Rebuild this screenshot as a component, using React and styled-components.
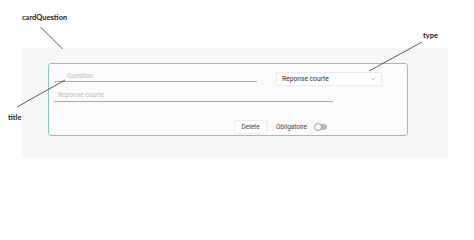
import React from 'react';
import styled, { createGlobalStyle } from 'styled-components';

const GlobalStyle = createGlobalStyle`
  html, body {
    margin: 0;
    padding: 0;
    background: #ffffff;
  }
  body {
    font-family: 'Roboto', 'Liberation Sans', sans-serif;
  }
`;

const Canvas = styled.div`
  position: relative;
  width: 474px;
  height: 227px;
  padding: 48px 0 0 22px;
  box-sizing: border-box;
  overflow: hidden;
`;

const Stage = styled.div`
  width: 426px;
  height: 109px;
  background: #f7f7f7;
  padding: 15px 0 0 26px;
  box-sizing: border-box;
`;

const Card = styled.div`
  width: 360px;
  height: 73px;
  box-sizing: border-box;
  border: 1px solid #8fc4c1;
  border-radius: 3px;
  background: #fcfbfb;
  padding: 7px 0 0 5px;
  display: flex;
  flex-direction: column;
`;

const Row = styled.div`
  display: flex;
  align-items: flex-start;
  gap: ${(p) => p.$gap || 0}px;
  margin-top: ${(p) => p.$top || 0}px;
`;

const Field = styled.div`
  width: ${(p) => p.$width}px;
  height: ${(p) => p.$height}px;
  box-sizing: border-box;
  border-bottom: 1.5px solid #7dbdb9;
  display: flex;
  align-items: center;
  padding-left: ${(p) => p.$indent}px;
  font-size: 6.6px;
  color: #bdbdbd;
  white-space: nowrap;
`;

const Select = styled.div`
  width: 106px;
  height: 14px;
  margin-top: 1px;
  box-sizing: border-box;
  background: #ffffff;
  border: 1px solid #ebebeb;
  border-radius: 1px;
  display: flex;
  align-items: center;
  justify-content: space-between;
  padding: 0 5px 0 5px;
  font-size: 6.7px;
  color: #2f2f2f;
`;

const Footer = styled.div`
  width: 279px;
  display: flex;
  justify-content: flex-end;
  align-items: center;
  gap: 9px;
  margin-top: 18px;
  padding-right: 6px;
  box-sizing: border-box;
`;

const Button = styled.div`
  width: 33px;
  height: 14px;
  box-sizing: border-box;
  background: #ffffff;
  border: 1px solid #ececec;
  border-radius: 2px;
  display: flex;
  align-items: center;
  justify-content: center;
  font-size: 6.4px;
  color: #444;
`;

const Label = styled.span`
  font-size: 6.4px;
  color: #444;
  margin-right: -1px;
`;

const Toggle = styled.div`
  position: relative;
  width: 12px;
  height: 6px;
  border-radius: 3px;
  background: #b9b9b9;
`;

const Knob = styled.div`
  position: absolute;
  left: -1px;
  top: -1px;
  width: 6px;
  height: 6px;
  border-radius: 50%;
  background: #ffffff;
  border: 1px solid #9a9a9a;
`;

const Note = styled.span`
  position: absolute;
  left: ${(p) => p.$x}px;
  top: ${(p) => p.$y}px;
  font-family: 'Lato', 'Liberation Sans', sans-serif;
  font-weight: 700;
  font-size: 7.5px;
  color: #222;
  line-height: 1;
`;

const Lines = styled.svg`
  position: absolute;
  left: 0;
  top: 0;
  pointer-events: none;
`;

const Chevron = () => (
  <svg width="6" height="4" viewBox="0 0 6 4">
    <path d="M0.8 0.8 L3 3 L5.2 0.8" fill="none" stroke="#b5b5b5" strokeWidth="0.7" />
  </svg>
);

export default function App() {
  return (
    <>
      <GlobalStyle />
      <Canvas>
        <Stage>
          <Card>
            <Row $gap={19}>
              <Field $width={203} $height={11} $indent={13}>Question</Field>
              <Select>
                <span>Reponse courte</span>
                <Chevron />
              </Select>
            </Row>
            <Row $top={3}>
              <Field $width={279} $height={13} $indent={4}>Reponse courte</Field>
            </Row>
            <Footer>
              <Button>Delete</Button>
              <Label>Obligatoire</Label>
              <Toggle>
                <Knob />
              </Toggle>
            </Footer>
          </Card>
        </Stage>
        <Note $x={22} $y={14}>cardQuestion</Note>
        <Note $x={8} $y={114}>title</Note>
        <Note $x={423} $y={32}>type</Note>
        <Lines width="474" height="227">
          <line x1="40.5" y1="27" x2="62.5" y2="49" stroke="#333" strokeWidth="0.8" />
          <line x1="17" y1="107" x2="65" y2="80" stroke="#333" strokeWidth="0.8" />
          <line x1="422" y1="42" x2="369" y2="71" stroke="#333" strokeWidth="0.8" />
        </Lines>
      </Canvas>
    </>
  );
}
